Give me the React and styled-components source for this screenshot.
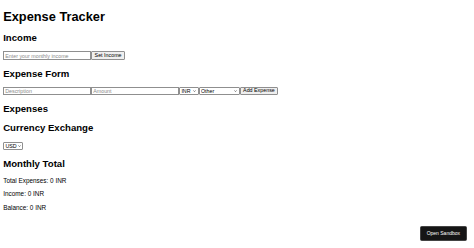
import React, { useState } from 'react';
import styled, { createGlobalStyle } from 'styled-components';

// Sizes are the browser defaults shown at 40%
const GlobalStyle = createGlobalStyle`
  body {
    margin: 3.2px;
    font-family: "Liberation Sans", Arial, sans-serif;
    color: #000;
    background: #fff;
  }
`;

const Page = styled.div`
  display: block;
`;

const Title = styled.h1`
  font-size: 12.8px;
  font-weight: 700;
  margin: 5.6px 0 8.58px;
`;

const SectionTitle = styled.h2`
  font-size: 9.6px;
  font-weight: 700;
  margin: 7.97px 0;
`;

const Row = styled.div`
  display: flex;
  align-items: center;
  min-height: 8.6px;
`;

const TextInput = styled.input`
  width: 88px;
  height: 8.4px;
  box-sizing: border-box;
  font-family: "Liberation Sans", Arial, sans-serif;
  font-size: 5.33px;
  padding: 0 1px;
  margin: 0;
  border: 0.8px solid #8f8f8f;
  border-radius: 0;
  background: #fff;
  outline: none;

  &::placeholder {
    color: #8a8a8a;
  }
`;

const Select = styled.select`
  appearance: none;
  width: ${(p) => p.$width}px;
  height: 7.8px;
  box-sizing: border-box;
  margin: 0;
  padding: 0 0 0 1.2px;
  font-family: "Liberation Sans", Arial, sans-serif;
  font-size: 5.33px;
  color: #000;
  border: 0.8px solid #8f8f8f;
  border-radius: 1px;
  background-color: #fff;
  background-image: url("data:image/svg+xml,%3Csvg xmlns='http://www.w3.org/2000/svg' width='10' height='6' viewBox='0 0 10 6'%3E%3Cpath d='M1 1l4 4 4-4' fill='none' stroke='%23222' stroke-width='1.8'/%3E%3C/svg%3E");
  background-repeat: no-repeat;
  background-size: 3px 2px;
  background-position: right 1.6px center;
  outline: none;
`;

const Button = styled.button`
  height: 8.4px;
  box-sizing: border-box;
  margin: 0;
  padding: 0 2.4px;
  font-family: "Liberation Sans", Arial, sans-serif;
  font-size: 5.33px;
  line-height: 1;
  color: #000;
  background: #efefef;
  border: 0.8px solid #8f8f8f;
  border-radius: 1px;
`;

const Line = styled.p`
  font-size: 6.4px;
  margin: 6.4px 0;
`;

const SandboxLink = styled.a`
  position: fixed;
  right: 7px;
  bottom: 7px;
  background: #151515;
  color: #fff;
  border: 0.4px solid #444;
  border-radius: 1.6px;
  padding: 3.6px 6px;
  font-size: 5px;
  line-height: 1.15;
  text-decoration: none;
`;

const currencies = ['INR', 'USD', 'EUR'];
const categories = ['Food', 'Transport', 'Entertainment', 'Utilities', 'Other'];

export default function App() {
  const [income, setIncome] = useState(0);
  const [total] = useState(0);

  return (
    <Page>
      <GlobalStyle />
      <Title>Expense Tracker</Title>

      <SectionTitle>Income</SectionTitle>
      <Row>
        <TextInput type="number" placeholder="Enter your monthly income" />
        <Button onClick={() => setIncome(income)}>Set Income</Button>
      </Row>

      <SectionTitle>Expense Form</SectionTitle>
      <Row>
        <TextInput type="text" placeholder="Description" />
        <TextInput type="number" placeholder="Amount" />
        <Select $width={19.5} defaultValue="INR">
          {currencies.map((c) => (
            <option key={c} value={c}>{c}</option>
          ))}
        </Select>
        <Select $width={41} defaultValue="Other">
          {categories.map((c) => (
            <option key={c} value={c}>{c}</option>
          ))}
        </Select>
        <Button>Add Expense</Button>
      </Row>

      <SectionTitle>Expenses</SectionTitle>

      <SectionTitle>Currency Exchange</SectionTitle>
      <Row>
        <Select $width={20} defaultValue="USD">
          {['USD', 'EUR', 'INR'].map((c) => (
            <option key={c} value={c}>{c}</option>
          ))}
        </Select>
      </Row>

      <SectionTitle>Monthly Total</SectionTitle>
      <Line>Total Expenses: {total} INR</Line>
      <Line>Income: {income} INR</Line>
      <Line>Balance: {income - total} INR</Line>

      <SandboxLink href="#">Open Sandbox</SandboxLink>
    </Page>
  );
}
